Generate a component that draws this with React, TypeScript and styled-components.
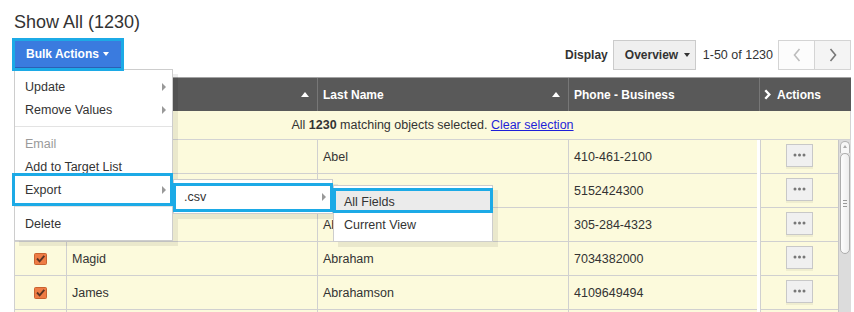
import React from "react";
import styled, { createGlobalStyle } from "styled-components";

const GlobalStyle = createGlobalStyle`
  html, body { margin: 0; padding: 0; background: #fff; }
  body {
    font-family: "Liberation Sans", Arial, Helvetica, sans-serif;
    color: #333;
    overflow: hidden;
  }
`;

const Page = styled.div`
  width: 854px;
  height: 312px;
  box-sizing: border-box;
  padding: 10px 3px 0 14px;
  overflow: hidden;
`;

const Title = styled.h1`
  margin: 0;
  font-size: 18px;
  font-weight: normal;
  line-height: 24px;
  color: #333;
`;

const Toolbar = styled.div`
  margin-top: 4px;
  height: 33px;
  display: flex;
  align-items: center;
  justify-content: space-between;
`;

const BulkWrap = styled.div`
  position: relative;
  margin-left: 1px;
`;

const BulkButton = styled.button`
  position: relative;
  z-index: 11;
  width: 106px;
  height: 27px;
  box-sizing: border-box;
  display: flex;
  align-items: center;
  gap: 4px;
  padding: 0 0 0 11px;
  border: none;
  border-bottom: 1px solid #2b5fb5;
  background: #3a7bdf;
  color: #fff;
  font-family: inherit;
  font-weight: bold;
  font-size: 12px;
  cursor: pointer;
`;

const Caret = styled.span<{ $color: string }>`
  width: 0;
  height: 0;
  border-left: 3.5px solid transparent;
  border-right: 3.5px solid transparent;
  border-top: 4px solid ${(p) => p.$color};
`;

const Highlight = styled.div<{ $t: number; $r: number; $b: number; $l: number }>`
  position: absolute;
  top: ${(p) => p.$t}px;
  right: ${(p) => p.$r}px;
  bottom: ${(p) => p.$b}px;
  left: ${(p) => p.$l}px;
  border: 3px solid #1caae6;
  pointer-events: none;
  z-index: 12;
`;

const Menu = styled.div<{ $left: string; $top: string; $width: number; $padTop: number }>`
  position: absolute;
  left: ${(p) => p.$left};
  top: ${(p) => p.$top};
  width: ${(p) => p.$width}px;
  box-sizing: border-box;
  padding: ${(p) => p.$padTop}px 0 5px;
  background: #fff;
  border: 1px solid #cdcdcd;
  box-shadow: 5px 5px 0 rgba(0, 0, 0, 0.07);
  z-index: 10;
`;

const MenuItem = styled.div<{ $disabled?: boolean; $active?: boolean }>`
  position: relative;
  display: flex;
  align-items: center;
  height: 23px;
  padding: 0 6px 0 10px;
  font-size: 12.5px;
  white-space: nowrap;
  color: ${(p) => (p.$disabled ? "#9a9a9a" : "#333")};
  background: ${(p) => (p.$active ? "#ebebeb" : "transparent")};
`;

const SubArrow = styled.span`
  margin-left: auto;
  width: 0;
  height: 0;
  border-top: 4px solid transparent;
  border-bottom: 4px solid transparent;
  border-left: 4px solid #999;
`;

const Divider = styled.div`
  height: 1px;
  margin: 5px 0;
  background: #e3e3e3;
`;

const RightTools = styled.div`
  display: flex;
  align-items: center;
`;

const DisplayLabel = styled.span`
  font-weight: bold;
  font-size: 12px;
  color: #333;
  margin-right: 5px;
`;

const Select = styled.div`
  width: 83px;
  height: 30px;
  box-sizing: border-box;
  display: flex;
  align-items: center;
  gap: 6px;
  padding: 0 6px 0 11px;
  background: #efefef;
  border: 1px solid #cbcbcb;
  font-weight: bold;
  font-size: 12px;
  color: #333;
`;

const RangeText = styled.span`
  font-size: 12.5px;
  color: #333;
  margin: 0 5px 0 7px;
`;

const Pager = styled.div`
  display: flex;
`;

const PageButton = styled.button<{ $disabled?: boolean }>`
  width: 37px;
  height: 30px;
  box-sizing: border-box;
  display: flex;
  align-items: center;
  justify-content: center;
  padding: 0;
  margin-left: -1px;
  border: 1px solid #d4d4d4;
  background: ${(p) => (p.$disabled ? "#fcfcfc" : "#f4f4f4")};
  color: ${(p) => (p.$disabled ? "#bdbdbd" : "#777")};
  &:first-child { margin-left: 0; }
`;

const Table = styled.div`
  margin-top: 6px;
`;

const HeaderRow = styled.div`
  display: grid;
  grid-template-columns: 52px 251px 251px 191px 92px;
  height: 34px;
  box-sizing: border-box;
  background: #595959;
  border-top: 1px solid #a3a3a3;
  color: #fff;
  font-weight: bold;
  font-size: 12px;
`;

const HeadCell = styled.div`
  display: flex;
  align-items: center;
  padding: 0 8px 0 5px;
  border-left: 1px solid #777;
  &:first-child { border-left: none; }
`;

const SortUp = styled.span`
  margin-left: auto;
  width: 0;
  height: 0;
  border-left: 4px solid transparent;
  border-right: 4px solid transparent;
  border-bottom: 5px solid #fff;
`;

const HeadChevron = styled.svg`
  margin: 0 6px 0 -1px;
`;

const SelectionRow = styled.div`
  height: 29px;
  box-sizing: border-box;
  display: flex;
  align-items: center;
  justify-content: center;
  background: #fcfadc;
  border: 1px solid #d3d3d3;
  border-top: none;
  font-size: 12.5px;
  color: #333;
  white-space: pre;
`;

const ClearLink = styled.a`
  color: #1f1fd8;
  text-decoration: underline;
  cursor: pointer;
`;

const Body = styled.div`
  display: flex;
`;

const Rows = styled.div`
  width: 824px;
`;

const Row = styled.div`
  display: grid;
  grid-template-columns: 52px 251px 251px 189px 3px 78px;
  height: 34px;
`;

const Cell = styled.div<{ $center?: boolean }>`
  display: flex;
  align-items: center;
  justify-content: ${(p) => (p.$center ? "center" : "flex-start")};
  padding: 0 5px;
  background: #fcfadc;
  border-left: 1px solid #d0d0d0;
  border-bottom: 1px solid #d0d0d0;
  font-size: 12.5px;
  color: #333;
  white-space: nowrap;
  overflow: hidden;
`;

const ActionCell = styled(Cell)`
  justify-content: center;
  padding-bottom: 3px;
`;

const GapCell = styled.div`
  background: #fff;
`;

const DotsButton = styled.button`
  width: 27px;
  height: 23px;
  box-sizing: border-box;
  display: flex;
  align-items: center;
  justify-content: center;
  padding: 0;
  border: 1px solid #c8c8c8;
  background: #f0f0f0;
  box-shadow: 0 2px 0 rgba(0, 0, 0, 0.05);
`;

const ScrollTrack = styled.div`
  width: 13px;
  box-sizing: border-box;
  display: flex;
  flex-direction: column;
  align-items: center;
  padding-top: 1px;
  background: #dcdcdc;
  border-left: 1px solid #c6c6c6;
`;

const ScrollCap = styled.div`
  width: 10px;
  height: 12px;
  box-sizing: border-box;
  display: flex;
  justify-content: center;
  padding-top: 3px;
  background: #f7f7f7;
  border: 1px solid #b3b3b3;
  border-bottom: none;
  border-radius: 5px 5px 0 0;
`;

const CapArrow = styled.span`
  width: 0;
  height: 0;
  border-left: 2.5px solid transparent;
  border-right: 2.5px solid transparent;
  border-bottom: 3px solid #aaa;
`;

const ScrollThumb = styled.div`
  width: 10px;
  height: 101px;
  box-sizing: border-box;
  display: flex;
  flex-direction: column;
  align-items: center;
  justify-content: center;
  gap: 2px;
  background: linear-gradient(to right, #fdfdfd, #ededed);
  border: 1px solid #adadad;
  border-radius: 5px;
`;

const Grip = styled.span`
  width: 4px;
  height: 1px;
  background: #999;
`;

const CheckIcon = () => (
  <svg width="13" height="12" viewBox="0 0 13 12">
    <rect x="0.5" y="0.5" width="12" height="11" rx="1" fill="#ee7c45" stroke="#c9622f" />
    <path d="M3 5.5 L5.6 8.3 L10.3 2.8" fill="none" stroke="#5b3424" strokeWidth="1.9" />
  </svg>
);

const Dots = () => (
  <svg width="13" height="4" viewBox="0 0 13 4">
    <circle cx="2" cy="2" r="1.5" fill="#777" />
    <circle cx="6.5" cy="2" r="1.5" fill="#777" />
    <circle cx="11" cy="2" r="1.5" fill="#777" />
  </svg>
);

const Chevron = ({ dir }: { dir: "left" | "right" }) => (
  <svg width="8" height="14" viewBox="0 0 8 14">
    <path
      d={dir === "left" ? "M6.5 1 L1.5 7 L6.5 13" : "M1.5 1 L6.5 7 L1.5 13"}
      fill="none"
      stroke="currentColor"
      strokeWidth="1.6"
    />
  </svg>
);

const rows = [
  { first: "", last: "Abel", phone: "410-461-2100" },
  { first: "", last: "", phone: "5152424300" },
  { first: "", last: "Ab", phone: "305-284-4323" },
  { first: "Magid", last: "Abraham", phone: "7034382000" },
  { first: "James", last: "Abrahamson", phone: "4109649494" },
];

export default function App() {
  return (
    <>
      <GlobalStyle />
      <Page>
        <Title>Show All (1230)</Title>
        <Toolbar>
          <BulkWrap>
            <BulkButton>
              Bulk Actions <Caret $color="#fff" />
            </BulkButton>
            <Highlight $t={-3} $r={-3} $b={-3} $l={-3} />
            <Menu $left="-1px" $top="28px" $width={159} $padTop={5}>
              <MenuItem>
                Update <SubArrow />
              </MenuItem>
              <MenuItem>
                Remove Values <SubArrow />
              </MenuItem>
              <Divider />
              <MenuItem $disabled>Email</MenuItem>
              <MenuItem>Add to Target List</MenuItem>
              <MenuItem>
                Export <SubArrow />
                <Highlight $t={-5} $r={-1} $b={-5} $l={-3} />
                <Menu $left="calc(100% + 1px)" $top="1px" $width={160} $padTop={5}>
                  <MenuItem>
                    .csv <SubArrow />
                    <Highlight $t={-2} $r={-1} $b={-4} $l={-1} />
                    <Menu $left="calc(100% + 1px)" $top="0px" $width={160} $padTop={4}>
                      <MenuItem $active>
                        All Fields
                        <Highlight $t={-2} $r={-1} $b={0} $l={-1} />
                      </MenuItem>
                      <MenuItem>Current View</MenuItem>
                    </Menu>
                  </MenuItem>
                </Menu>
              </MenuItem>
              <Divider />
              <MenuItem>Delete</MenuItem>
            </Menu>
          </BulkWrap>
          <RightTools>
            <DisplayLabel>Display</DisplayLabel>
            <Select>
              Overview <Caret $color="#333" />
            </Select>
            <RangeText>1-50 of 1230</RangeText>
            <Pager>
              <PageButton $disabled>
                <Chevron dir="left" />
              </PageButton>
              <PageButton>
                <Chevron dir="right" />
              </PageButton>
            </Pager>
          </RightTools>
        </Toolbar>
        <Table>
          <HeaderRow>
            <HeadCell />
            <HeadCell>
              <SortUp />
            </HeadCell>
            <HeadCell>
              Last Name <SortUp />
            </HeadCell>
            <HeadCell>Phone - Business</HeadCell>
            <HeadCell>
              <HeadChevron width="7" height="11" viewBox="0 0 7 11">
                <path d="M1.3 1.2 L5.3 5.5 L1.3 9.8" fill="none" stroke="#fff" strokeWidth="2.4" />
              </HeadChevron>
              Actions
            </HeadCell>
          </HeaderRow>
          <SelectionRow>
            All <b>1230</b> matching objects selected. <ClearLink>Clear selection</ClearLink>
          </SelectionRow>
          <Body>
            <Rows>
              {rows.map((r) => (
                <Row key={r.phone}>
                  <Cell $center>
                    <CheckIcon />
                  </Cell>
                  <Cell>{r.first}</Cell>
                  <Cell>{r.last}</Cell>
                  <Cell>{r.phone}</Cell>
                  <GapCell />
                  <ActionCell>
                    <DotsButton>
                      <Dots />
                    </DotsButton>
                  </ActionCell>
                </Row>
              ))}
              <Row>
                <Cell />
                <Cell />
                <Cell />
                <Cell />
                <GapCell />
                <Cell />
              </Row>
            </Rows>
            <ScrollTrack>
              <ScrollCap>
                <CapArrow />
              </ScrollCap>
              <ScrollThumb>
                <Grip />
                <Grip />
                <Grip />
              </ScrollThumb>
            </ScrollTrack>
          </Body>
        </Table>
      </Page>
    </>
  );
}
